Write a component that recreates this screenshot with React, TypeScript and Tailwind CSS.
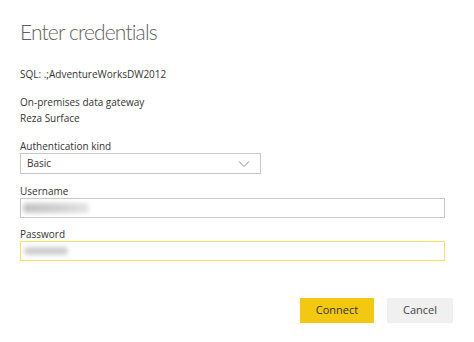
import React from "react";

export default function App() {
  return (
    <div
      className="w-[474px] h-[342px] bg-white overflow-hidden"
      style={{ fontFamily: '"Open Sans", "Noto Sans", sans-serif' }}
    >
      <div className="pt-[18px] pl-[20px]">
        <h1
          className="text-[21px] leading-[28px] font-light text-[#5f5f5f] tracking-[-0.85px]"
          style={{ fontFamily: 'Lato, "Open Sans", sans-serif' }}
        >
          Enter credentials
        </h1>
        <div className="mt-[20px] text-[10px] leading-[16px] text-[#333]">
          SQL: .;AdventureWorksDW2012
        </div>
        <div className="mt-[12px] text-[10px] leading-[16px] text-[#333]">
          On-premises data gateway
        </div>
        <div className="text-[10px] leading-[16px] text-[#333]">Reza Surface</div>

        <div className="mt-[13px] text-[10px] leading-[14px] text-[#333]">
          Authentication kind
        </div>
        <div className="w-[241px] h-[21px] border border-[#c8c8c8] flex items-center justify-between pl-[6px] pr-[10px]">
          <span className="text-[10px] text-[#333]">Basic</span>
          <svg width="12" height="8" viewBox="0 0 12 8" fill="none">
            <path d="M1 1.5 L6 6.5 L11 1.5" stroke="#8a8a8a" strokeWidth="1" />
          </svg>
        </div>

        <div className="mt-[10px] text-[10px] leading-[14px] text-[#333]">Username</div>
        <div className="w-[425px] h-[20px] border border-[#c8c8c8] flex items-center pl-[2px]">
          <div className="w-[66px] h-[10px] bg-gradient-to-r from-[#c4c4c4] via-[#d0d0d0] to-[#e4e4e4] blur-[2px] rounded-sm" />
        </div>

        <div className="mt-[9px] text-[10px] leading-[14px] text-[#333]">Password</div>
        <div className="w-[425px] h-[20px] border border-[#f2e16a] flex items-center pl-[3px]">
          <div className="w-[44px] h-[8px] bg-[#cfcfcf] blur-[2px] rounded-sm" />
        </div>

        <div className="mt-[37px] flex justify-end pr-[21px] gap-[13px]">
          <button className="w-[74px] h-[25px] bg-[#f2c811] text-[11px] text-[#333]">
            Connect
          </button>
          <button className="w-[66px] h-[25px] bg-[#f0f0f0] text-[11px] text-[#444]">
            Cancel
          </button>
        </div>
      </div>
    </div>
  );
}
